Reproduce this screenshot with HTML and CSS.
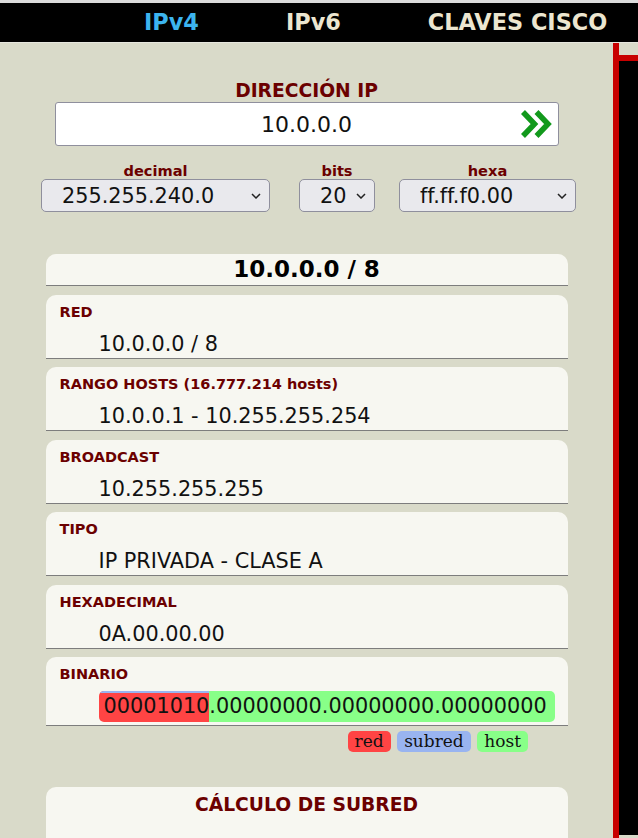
FILE: index.html
```html
<!DOCTYPE html>
<html lang="es">
<head>
<meta charset="utf-8">
<title>Calculadora IP</title>
<link rel="stylesheet" href="styles.css">
</head>
<body>
<div class="topstrip"></div>
<nav class="nav">
  <a class="nav-item active">IPv4</a>
  <a class="nav-item">IPv6</a>
  <a class="nav-item">CLAVES CISCO</a>
</nav>
<div class="layout">
  <main class="main">
    <section class="ip-form">
      <h2 class="title">DIRECCIÓN IP</h2>
      <div class="ip-input-wrap">
        <input class="ip-input" type="text" value="10.0.0.0">
        <button class="go" type="button" aria-label="calcular">
          <svg width="32" height="28" viewBox="0 0 32 28"><polyline points="3,2 14.5,14 3,26" fill="none" stroke="#12991c" stroke-width="5.5" stroke-linejoin="miter"/><polyline points="16.5,2 28,14 16.5,26" fill="none" stroke="#12991c" stroke-width="5.5" stroke-linejoin="miter"/></svg>
        </button>
      </div>
      <div class="mask-row">
        <div class="mask-group g-dec">
          <span class="mask-label">decimal</span>
          <span class="select-wrap">
            <select class="sel"><option>255.255.240.0</option></select>
            <svg class="chev" width="10" height="6" viewBox="0 0 10 6"><polyline points="1,1 5,5 9,1" fill="none" stroke="#222" stroke-width="1.5"/></svg>
          </span>
        </div>
        <div class="mask-group g-bits">
          <span class="mask-label">bits</span>
          <span class="select-wrap">
            <select class="sel"><option>20</option></select>
            <svg class="chev" width="10" height="6" viewBox="0 0 10 6"><polyline points="1,1 5,5 9,1" fill="none" stroke="#222" stroke-width="1.5"/></svg>
          </span>
        </div>
        <div class="mask-group g-hex">
          <span class="mask-label">hexa</span>
          <span class="select-wrap">
            <select class="sel"><option>ff.ff.f0.00</option></select>
            <svg class="chev" width="10" height="6" viewBox="0 0 10 6"><polyline points="1,1 5,5 9,1" fill="none" stroke="#222" stroke-width="1.5"/></svg>
          </span>
        </div>
      </div>
    </section>

    <section class="results">
      <div class="card head">10.0.0.0 / 8</div>
      <div class="card">
        <div class="label">RED</div>
        <div class="value">10.0.0.0 / 8</div>
      </div>
      <div class="card">
        <div class="label">RANGO HOSTS (16.777.214 hosts)</div>
        <div class="value">10.0.0.1 - 10.255.255.254</div>
      </div>
      <div class="card">
        <div class="label">BROADCAST</div>
        <div class="value">10.255.255.255</div>
      </div>
      <div class="card">
        <div class="label">TIPO</div>
        <div class="value">IP PRIVADA - CLASE A</div>
      </div>
      <div class="card">
        <div class="label">HEXADECIMAL</div>
        <div class="value">0A.00.00.00</div>
      </div>
      <div class="card bin">
        <div class="label">BINARIO</div>
        <div class="value"><span class="bits"><span class="b-red">00001010</span><span class="b-host">.00000000.00000000.00000000</span></span></div>
      </div>
    </section>
    <div class="legend">
      <span class="lg lg-red">red</span>
      <span class="lg lg-sub">subred</span>
      <span class="lg lg-host">host</span>
    </div>

    <section class="card calc">
      <h2 class="title">CÁLCULO DE SUBRED</h2>
    </section>
  </main>
  <aside class="side"><div class="side-box"></div></aside>
</div>
</body>
</html>
```
FILE: styles.css
```css
* { box-sizing: border-box; }
html, body { margin: 0; padding: 0; }
body {
  background: #d9dac9;
  font-family: "DejaVu Sans", sans-serif;
  color: #111;
  overflow: hidden;
  height: 838px;
}
.topstrip { height: 3px; background: #dcdcdc; }
.nav {
  height: 40px;
  background: #000;
  border-bottom: 1px solid #e6e6de;
  display: flex;
  align-items: center;
  padding-left: 144px;
  gap: 87px;
}
.nav-item {
  font-weight: bold;
  font-size: 22.4px;
  line-height: 39px;
  color: #ece6d0;
  text-decoration: none;
}
.nav-item.active { color: #3cb4ee; }

.layout { display: flex; }
.main { width: 613px; flex: none; padding-top: 37px; }
.side {
  flex: 1;
  border-left: 6px solid #c80000;
  height: 800px;
}
.side-box {
  margin-top: 12px;
  border-top: 6px solid #c80000;
  background: #000;
  height: 780px;
}

.title {
  margin: 0;
  text-align: center;
  font-size: 18.7px;
  line-height: 22px;
  font-weight: bold;
  color: #6b0000;
}
.ip-input-wrap {
  position: relative;
  width: 504px;
  margin: 0 auto;
}
.ip-input {
  display: block;
  width: 100%;
  height: 44px;
  border: 1px solid #8f8f9d;
  border-radius: 3px;
  background: #fff;
  font-family: "DejaVu Sans", sans-serif;
  font-size: 22px;
  text-align: center;
  color: #111;
  padding: 0;
}
.go {
  position: absolute;
  right: 6px;
  top: 8px;
  width: 34px;
  height: 28px;
  border: 0;
  background: transparent;
  padding: 0;
  display: flex;
  align-items: center;
  justify-content: center;
}

.mask-row {
  display: flex;
  margin-top: 17px;
  padding-left: 41px;
}
.mask-group { display: flex; flex-direction: column; align-items: center; }
.g-dec { width: 229px; }
.g-bits { width: 76px; margin-left: 29px; }
.g-hex { width: 177px; margin-left: 24px; }
.mask-label {
  font-size: 14.6px;
  line-height: 16px;
  font-weight: bold;
  color: #6b0000;
}
.select-wrap { position: relative; display: block; width: 100%; }
.sel {
  appearance: none;
  -webkit-appearance: none;
  display: block;
  width: 100%;
  height: 33px;
  border: 1px solid #8f8f9d;
  border-radius: 5px;
  background: #e9e9ed;
  font-family: "DejaVu Sans", sans-serif;
  font-size: 20.8px;
  color: #111;
  padding: 0 0 0 20px;
}
.chev {
  position: absolute;
  right: 9px;
  top: 14px;
  pointer-events: none;
}

.results {
  width: 522px;
  margin: 42px auto 0;
  display: flex;
  flex-direction: column;
  gap: 8.5px;
}
.card {
  background: #f7f7f1;
  border-radius: 10px 10px 0 0;
  border-bottom: 1px solid #7d7d7d;
  padding: 9px 14px 2px;
  height: 64px;
}
.card.head {
  height: 32px;
  padding: 0;
  text-align: center;
  font-weight: bold;
  font-size: 23px;
  line-height: 31px;
  color: #000;
}
.label {
  font-size: 14.5px;
  line-height: 16px;
  font-weight: bold;
  color: #6b0000;
}
.value {
  margin-top: 12px;
  padding-left: 39px;
  font-size: 20.8px;
  line-height: 24px;
  color: #111;
}
.card.bin { height: 69px; }
.bin .value { margin-top: 9px; }
.bits {
  display: inline-flex;
  border-radius: 5px;
  overflow: hidden;
  line-height: 25px;
}
.b-red {
  background: #ff4444;
  padding: 3px 0 3px 5px;
  box-shadow: inset 0 2px 0 #99b4f0;
}
.b-host {
  background: #88ff88;
  padding: 3px 8px 3px 0;
}

.legend {
  width: 522px;
  margin: 5px auto 0;
  display: flex;
  justify-content: flex-end;
  gap: 6.5px;
  padding-right: 39.5px;
}
.lg {
  font-family: "DejaVu Serif", serif;
  font-size: 17px;
  line-height: 21px;
  padding: 0 7px;
  border-radius: 5px;
  color: #111;
}
.lg-red { background: #ff4444; }
.lg-sub { background: #99b4f0; }
.lg-host { background: #88ff88; }

.card.calc {
  width: 522px;
  margin: 35px auto 0;
  height: 200px;
  padding-top: 7px;
  border-bottom: 0;
}
```
